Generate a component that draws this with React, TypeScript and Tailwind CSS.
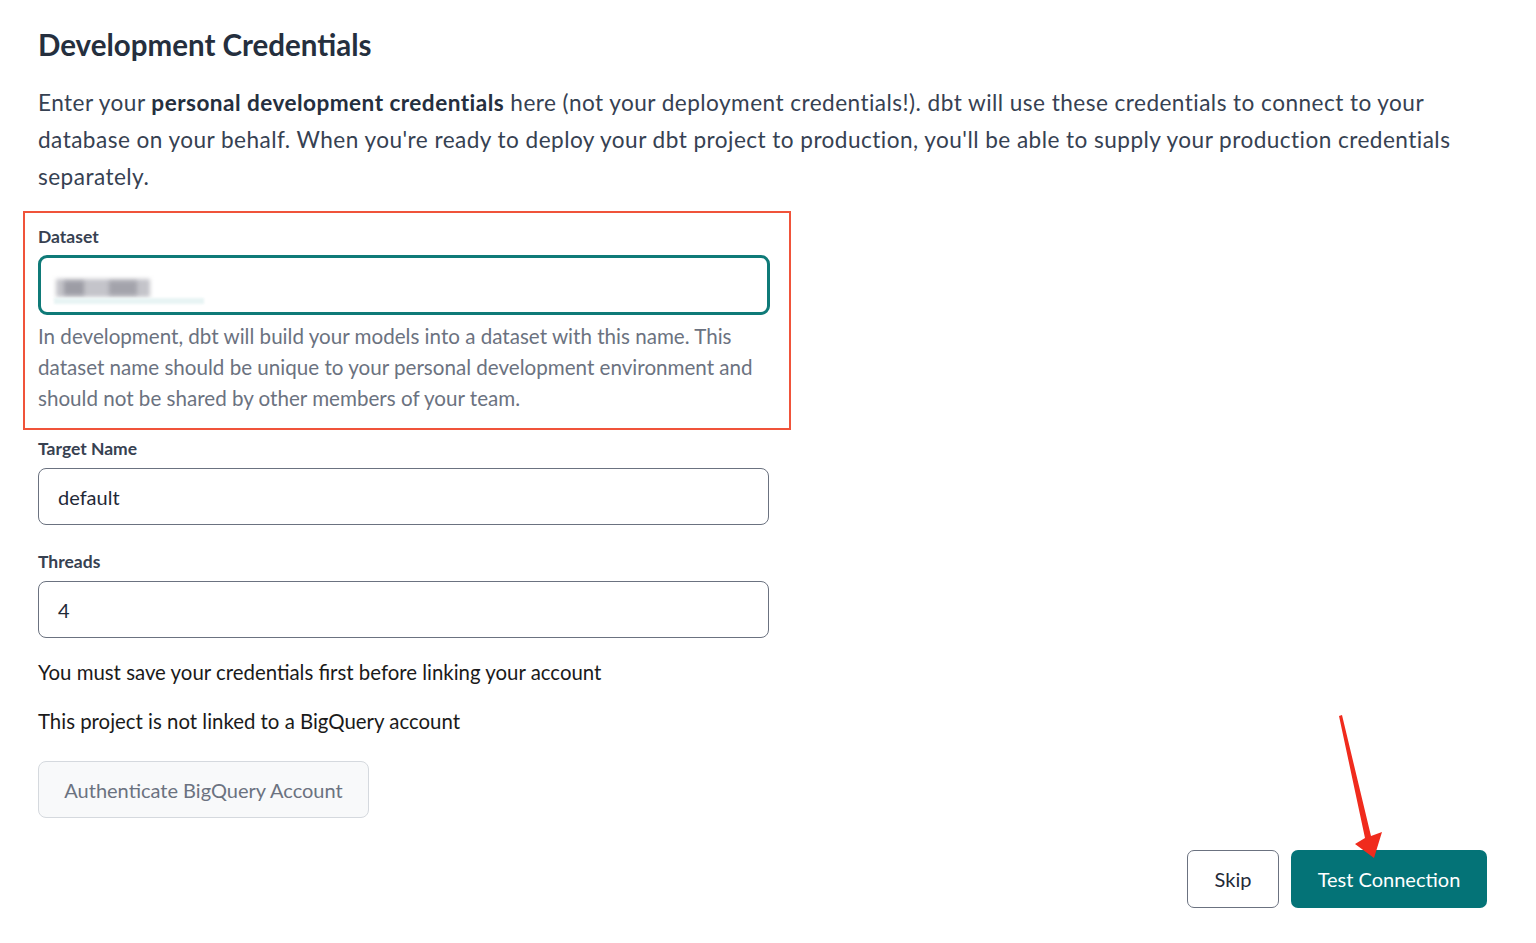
import React from "react";

export default function App() {
  return (
    <div className="relative min-h-[943px] w-[1536px] bg-white font-['Lato','Noto_Sans',sans-serif] text-[#2d3748]">
      <div className="flex flex-col pl-[38px] pt-[26px]">
        <h1 className="text-[29.5px] font-bold leading-[38px] text-[#252f3e]">Development Credentials</h1>
        <p className="mt-[20px] w-[1420px] text-[22.6px] leading-[37px] tracking-[0.45px] text-[#364152]">
          Enter your <b className="font-bold text-[#252f3e]">personal development credentials</b> here (not your deployment credentials!). dbt will use these credentials to connect to your database on your behalf. When you're ready to deploy your dbt project to production, you'll be able to supply your production credentials separately.
        </p>

        <div className="-ml-[15px] mt-[16px] w-[768px] border-2 border-[#f0533a] pb-[14px] pl-[13px] pt-[14px]">
          <label className="block text-[17.5px] font-bold leading-[20px] text-[#374151]">Dataset</label>
          <div className="mt-[8px] flex h-[60px] w-[732px] items-center rounded-[9px] border-[3px] border-[#0f7a78] px-[13px]">
            <div className="relative h-[36px] w-[160px]">
              <div className="absolute left-[2px] top-[12px] h-[18px] w-[94px] bg-[#c4c4ca] blur-[2px]" />
              <div className="absolute left-[10px] top-[14px] h-[14px] w-[20px] bg-[#9d9da5] blur-[2px]" />
              <div className="absolute left-[55px] top-[14px] h-[14px] w-[28px] bg-[#a3a3ab] blur-[2px]" />
              <div className="absolute left-[0px] top-[31px] h-[6px] w-[150px] bg-[#e8f4f4] blur-[1px]" />
            </div>
          </div>
          <p className="mt-[6px] w-[745px] text-[20.6px] leading-[31px] text-[#6b7280]">
            In development, dbt will build your models into a dataset with this name. This dataset name should be unique to your personal development environment and should not be shared by other members of your team.
          </p>
        </div>

        <label className="mt-[7px] block text-[17.5px] font-bold leading-[24px] text-[#374151]">Target Name</label>
        <div className="mt-[7px] flex h-[57px] w-[731px] items-center rounded-[8px] border-[1.5px] border-[#6b7280] px-[19px] text-[20px] text-[#1f2937]">default</div>

        <label className="mt-[25px] block text-[17.5px] font-bold leading-[24px] text-[#374151]">Threads</label>
        <div className="mt-[7px] flex h-[57px] w-[731px] items-center rounded-[8px] border-[1.5px] border-[#6b7280] px-[19px] text-[20px] text-[#1f2937]">4</div>

        <p className="mt-[20px] text-[20.4px] leading-[28px] text-[#1a1a1a]">You must save your credentials first before linking your account</p>
        <p className="mt-[21px] text-[20.4px] leading-[28px] text-[#1a1a1a]">This project is not linked to a BigQuery account</p>

        <button className="mt-[26px] flex h-[57px] w-[331px] items-center justify-center rounded-[8px] border-[1.5px] border-[#d5d9de] bg-[#f8f9fa] text-[20px] text-[#6b7280]">Authenticate BigQuery Account</button>
      </div>

      <div className="absolute left-[1187px] top-[850px] flex gap-[12px]">
        <button className="flex h-[58px] w-[92px] items-center justify-center rounded-[7px] border-[1.5px] border-[#6b7280] bg-white text-[20px] text-[#1f2937]">Skip</button>
        <button className="flex h-[58px] w-[196px] items-center justify-center rounded-[7px] bg-[#047377] text-[20px] text-white">Test Connection</button>
      </div>

      <svg className="absolute left-[1330px] top-[705px]" width="60" height="160" viewBox="0 0 60 160">
        <polygon points="9,11 12,10 41,131 52,127 44,153 25,139 35,133" fill="#f02b1d" />
      </svg>
    </div>
  );
}
